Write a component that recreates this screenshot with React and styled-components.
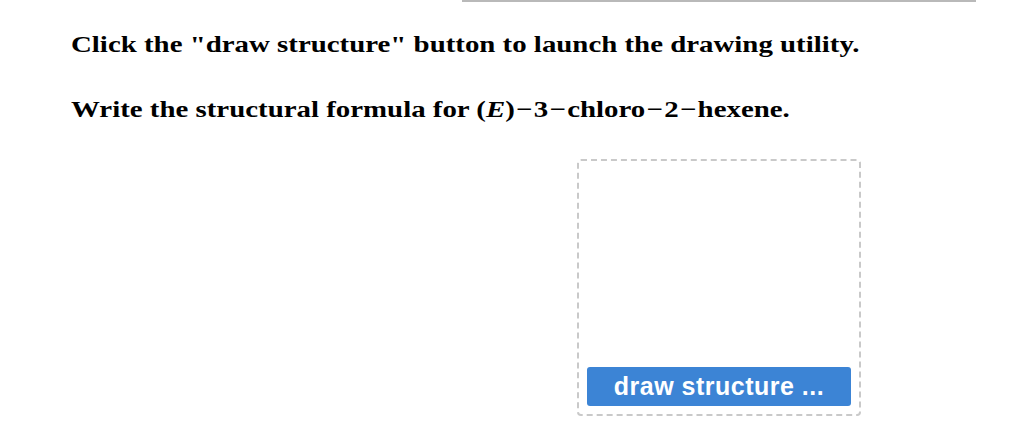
import React from 'react';
import styled, { createGlobalStyle } from 'styled-components';

const GlobalStyle = createGlobalStyle`
  body {
    margin: 0;
    background: #fff;
  }
`

const Page = styled.div`
  width: 1036px;
  height: 442px;
  overflow: hidden;
`

const Rule = styled.div`
  margin-left: 462px;
  width: 514px;
  height: 2px;
  background-color: #b9b9b9;
`

const Content = styled.div`
  padding: 32px 0 0 71px;
  font-family: "Liberation Serif", "Times New Roman", serif;
  font-weight: bold;
  font-size: 23px;
  color: #000;
`

// the question text is set wide
const Prompt = styled.p`
  margin: 0 0 ${(p) => p.gap || 0}px;
  line-height: 22px;
  white-space: nowrap;
  transform: scaleX(1.255);
  transform-origin: left center;
`

const Dash = styled.span`
  margin: 0 1px;
`

const DrawArea = styled.div`
  margin: 38px 0 0 577px;
  width: 284px;
  height: 257px;
  box-sizing: border-box;
  border: 2px dashed #c9c9c9;
  border-radius: 4px;
  display: flex;
  flex-direction: column;
  justify-content: flex-end;
  align-items: center;
  padding-bottom: 8px;
`

const DrawButton = styled.button`
  width: 264px;
  height: 39px;
  border: none;
  border-radius: 3px;
  background-color: #3c84d5;
  color: #fff;
  font-family: "Liberation Sans", Arial, sans-serif;
  font-weight: bold;
  font-size: 25px;
  letter-spacing: 0.5px;
  padding: 0;
  cursor: pointer;
`

const App = () => {
  return (
    <Page>
      <GlobalStyle />
      <Rule />
      <Content>
        <Prompt gap={43}>Click the "draw structure" button to launch the drawing utility.</Prompt>
        <Prompt>
          Write the structural formula for (<i>E</i>)<Dash>−</Dash>3<Dash>−</Dash>chloro<Dash>−</Dash>2<Dash>−</Dash>hexene.
        </Prompt>
      </Content>
      <DrawArea>
        <DrawButton>draw structure ...</DrawButton>
      </DrawArea>
    </Page>
  )
}

export default App
